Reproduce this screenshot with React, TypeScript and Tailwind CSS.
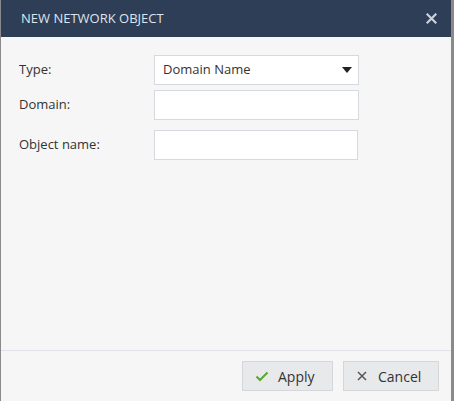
import React from "react";

const font = { fontFamily: '"Open Sans", "Noto Sans", sans-serif' };

function Row({ label, children, className }: { label: string; children: React.ReactNode; className?: string }) {
  return (
    <div className={"flex items-center " + (className ?? "")}>
      <div className="w-[135px] shrink-0 text-[13px] text-[#333]">{label}</div>
      {children}
    </div>
  );
}

export default function App() {
  return (
    <div className="flex h-[401px] w-[454px] bg-[#8a8a8a] pl-px pr-[3px]" style={font}>
      <div className="flex flex-1 flex-col bg-[#f6f6f6]">
        <div className="flex h-[37px] shrink-0 items-center justify-between bg-[#2e3e56] pl-[20px] pr-[14px]">
          <span className="pt-px text-[13px] text-[#dfe4ec]">NEW NETWORK OBJECT</span>
          <svg width="11" height="11" viewBox="0 0 11 11" className="text-[#c9d1dd]">
            <path d="M1.5 1.5 L9.5 9.5 M9.5 1.5 L1.5 9.5" stroke="currentColor" strokeWidth="2.2" strokeLinecap="square" />
          </svg>
        </div>

        <div className="flex-1 pl-[18px] pt-[18px]">
          <Row label="Type:">
            <div className="flex h-[30px] w-[205px] items-center justify-between border border-[#d6d9de] bg-white pl-[8px] pr-[6px] text-[13px] text-[#333]">
              <span>Domain Name</span>
              <svg width="10" height="6" viewBox="0 0 10 6">
                <path d="M0 0 H10 L5 6 Z" fill="#222" />
              </svg>
            </div>
          </Row>
          <Row label="Domain:" className="mt-[5px]">
            <div className="h-[30px] w-[205px] border border-[#d6d9de] bg-white" />
          </Row>
          <Row label="Object name:" className="mt-[10px]">
            <div className="h-[30px] w-[204px] border border-[#d6d9de] bg-white" />
          </Row>
        </div>

        <div className="flex h-[51px] shrink-0 justify-end gap-[10px] border-t border-[#dfe2e8] pr-[12px] pt-[10px]">
          <button className="flex h-[30px] w-[91px] items-center gap-[9px] border border-[#d4d6d9] bg-[#e8e9eb] pl-[12px] text-[14px] text-[#333]">
            <svg width="14" height="11" viewBox="0 0 14 11">
              <path d="M1.5 5.5 L5 9 L12.5 1.5" stroke="#5aa82c" strokeWidth="2" fill="none" />
            </svg>
            <span>Apply</span>
          </button>
          <button className="flex h-[30px] w-[96px] items-center gap-[11px] border border-[#d4d6d9] bg-[#e8e9eb] pl-[13px] text-[14px] text-[#333]">
            <svg width="10" height="10" viewBox="0 0 10 10">
              <path d="M1 1 L9 9 M9 1 L1 9" stroke="#555" strokeWidth="1.5" />
            </svg>
            <span>Cancel</span>
          </button>
        </div>
      </div>
    </div>
  );
}
